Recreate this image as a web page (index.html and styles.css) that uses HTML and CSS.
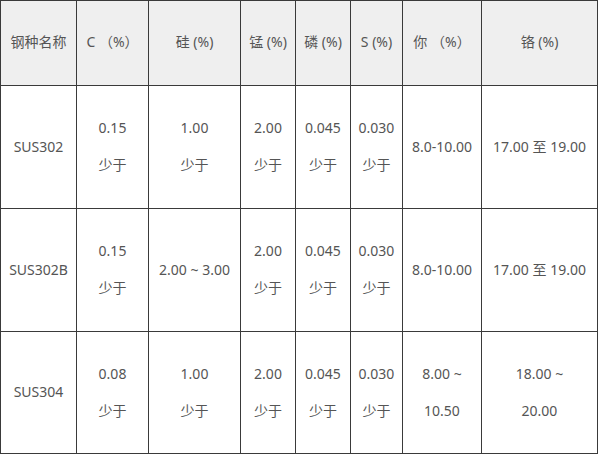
FILE: index.html
```html
<!DOCTYPE html>
<html lang="zh-CN">
<head>
<meta charset="utf-8">
<title>不锈钢成分表</title>
<link rel="stylesheet" href="styles.css">
</head>
<body>
<table class="spec">
  <colgroup>
    <col class="c1"><col class="c2"><col class="c3"><col class="c4"><col class="c5"><col class="c6"><col class="c7"><col class="c8">
  </colgroup>
  <thead>
    <tr class="head">
      <th>钢种名称</th>
      <th>C （%）</th>
      <th>硅 (%)</th>
      <th>锰 (%)</th>
      <th>磷 (%)</th>
      <th>S (%)</th>
      <th>你 （%）</th>
      <th>铬 (%)</th>
    </tr>
  </thead>
  <tbody>
    <tr class="r1">
      <td>SUS302</td>
      <td>0.15<br>少于</td>
      <td>1.00<br>少于</td>
      <td>2.00<br>少于</td>
      <td>0.045<br>少于</td>
      <td>0.030<br>少于</td>
      <td>8.0-10.00</td>
      <td>17.00 至 19.00</td>
    </tr>
    <tr class="r2">
      <td>SUS302B</td>
      <td>0.15<br>少于</td>
      <td>2.00 ~ 3.00</td>
      <td>2.00<br>少于</td>
      <td>0.045<br>少于</td>
      <td>0.030<br>少于</td>
      <td>8.0-10.00</td>
      <td>17.00 至 19.00</td>
    </tr>
    <tr class="r3">
      <td>SUS304</td>
      <td>0.08<br>少于</td>
      <td>1.00<br>少于</td>
      <td>2.00<br>少于</td>
      <td>0.045<br>少于</td>
      <td>0.030<br>少于</td>
      <td>8.00 ~<br>10.50</td>
      <td>18.00 ~<br>20.00</td>
    </tr>
  </tbody>
</table>
</body>
</html>
```

FILE: styles.css
```css
html, body {
  margin: 0;
  padding: 0;
  background: #ffffff;
}

.spec {
  border-collapse: collapse;
  table-layout: fixed;
  width: 597px;
  font-family: "Noto Sans", "Noto Sans CJK SC", sans-serif;
  font-size: 14px;
  color: #555555;
}

.c1 { width: 76px; }
.c2 { width: 72px; }
.c3 { width: 92px; }
.c4 { width: 55px; }
.c5 { width: 55px; }
.c6 { width: 52px; }
.c7 { width: 79px; }
.c8 { width: 116px; }

.spec th,
.spec td {
  border: 1px solid #3a3a3a;
  padding: 0 4px 2px;
  text-align: center;
  vertical-align: middle;
  line-height: 37px;
  font-weight: normal;
  white-space: nowrap;
}

.head th {
  background: #efefef;
  padding-bottom: 4px;
}

.head { height: 85px; }
.r1 { height: 123px; }
.r2 { height: 123px; }
.r3 { height: 122px; }
```
